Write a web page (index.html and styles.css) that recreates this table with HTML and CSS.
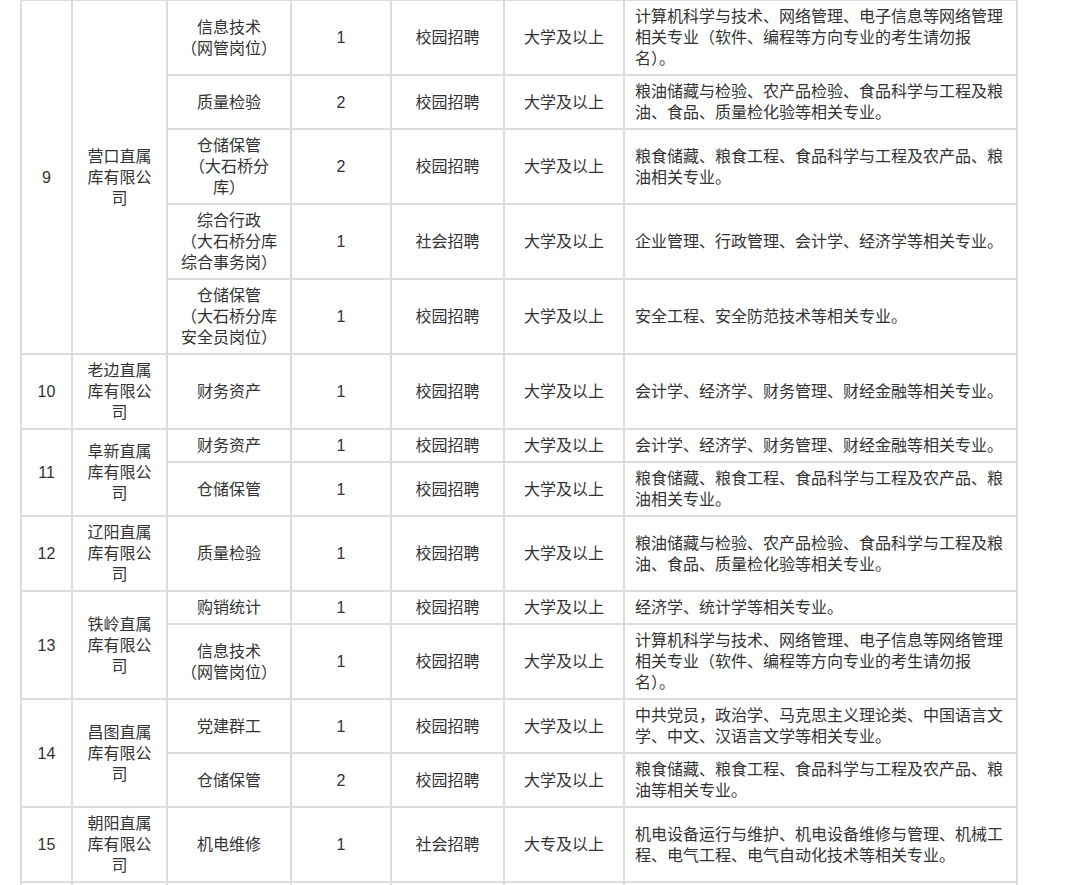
FILE: index.html
```html
<!DOCTYPE html>
<html lang="zh-CN">
<head>
<meta charset="utf-8">
<title>招聘岗位表</title>
<link rel="stylesheet" href="styles.css">
</head>
<body>
<div class="wrap">
<table class="jobs">
<colgroup>
<col class="c-no"><col class="c-co"><col class="c-pos"><col class="c-num"><col class="c-way"><col class="c-edu"><col class="c-major">
</colgroup>
<tbody>
<tr class="first">
<td rowspan="5">9</td><td rowspan="5">营口直属库有限公司</td>
<td>信息技术<br>（网管岗位）</td><td>1</td><td>校园招聘</td><td>大学及以上</td>
<td class="major">计算机科学与技术、网络管理、电子信息等网络管理相关专业（软件、编程等方向专业的考生请勿报名）。</td>
</tr>
<tr>
<td>质量检验</td><td>2</td><td>校园招聘</td><td>大学及以上</td>
<td class="major">粮油储藏与检验、农产品检验、食品科学与工程及粮油、食品、质量检化验等相关专业。</td>
</tr>
<tr>
<td>仓储保管<br>（大石桥分库）</td><td>2</td><td>校园招聘</td><td>大学及以上</td>
<td class="major">粮食储藏、粮食工程、食品科学与工程及农产品、粮油相关专业。</td>
</tr>
<tr>
<td>综合行政<br>（大石桥分库综合事务岗）</td><td>1</td><td>社会招聘</td><td>大学及以上</td>
<td class="major">企业管理、行政管理、会计学、经济学等相关专业。</td>
</tr>
<tr>
<td>仓储保管<br>（大石桥分库安全员岗位）</td><td>1</td><td>校园招聘</td><td>大学及以上</td>
<td class="major">安全工程、安全防范技术等相关专业。</td>
</tr>
<tr>
<td>10</td><td>老边直属库有限公司</td>
<td>财务资产</td><td>1</td><td>校园招聘</td><td>大学及以上</td>
<td class="major">会计学、经济学、财务管理、财经金融等相关专业。</td>
</tr>
<tr>
<td rowspan="2">11</td><td rowspan="2">阜新直属库有限公司</td>
<td>财务资产</td><td>1</td><td>校园招聘</td><td>大学及以上</td>
<td class="major">会计学、经济学、财务管理、财经金融等相关专业。</td>
</tr>
<tr>
<td>仓储保管</td><td>1</td><td>校园招聘</td><td>大学及以上</td>
<td class="major">粮食储藏、粮食工程、食品科学与工程及农产品、粮油相关专业。</td>
</tr>
<tr>
<td>12</td><td>辽阳直属库有限公司</td>
<td>质量检验</td><td>1</td><td>校园招聘</td><td>大学及以上</td>
<td class="major">粮油储藏与检验、农产品检验、食品科学与工程及粮油、食品、质量检化验等相关专业。</td>
</tr>
<tr>
<td rowspan="2">13</td><td rowspan="2">铁岭直属库有限公司</td>
<td>购销统计</td><td>1</td><td>校园招聘</td><td>大学及以上</td>
<td class="major">经济学、统计学等相关专业。</td>
</tr>
<tr>
<td>信息技术<br>（网管岗位）</td><td>1</td><td>校园招聘</td><td>大学及以上</td>
<td class="major">计算机科学与技术、网络管理、电子信息等网络管理相关专业（软件、编程等方向专业的考生请勿报名）。</td>
</tr>
<tr>
<td rowspan="2">14</td><td rowspan="2">昌图直属库有限公司</td>
<td>党建群工</td><td>1</td><td>校园招聘</td><td>大学及以上</td>
<td class="major">中共党员，政治学、马克思主义理论类、中国语言文学、中文、汉语言文学等相关专业。</td>
</tr>
<tr>
<td>仓储保管</td><td>2</td><td>校园招聘</td><td>大学及以上</td>
<td class="major">粮食储藏、粮食工程、食品科学与工程及农产品、粮油等相关专业。</td>
</tr>
<tr>
<td>15</td><td>朝阳直属库有限公司</td>
<td>机电维修</td><td>1</td><td>社会招聘</td><td>大专及以上</td>
<td class="major">机电设备运行与维护、机电设备维修与管理、机械工程、电气工程、电气自动化技术等相关专业。</td>
</tr>
<tr class="next">
<td></td><td></td><td></td><td></td><td></td><td></td><td></td>
</tr>
</tbody>
</table>
</div>
</body>
</html>
```
FILE: styles.css
```css
html, body {
  margin: 0;
  padding: 0;
  background: #fff;
}
.wrap {
  padding: 0 0 0 20px;
}
.jobs {
  border-collapse: collapse;
  table-layout: fixed;
  width: 998px;
  font-family: "Liberation Sans", "Noto Sans CJK SC", sans-serif;
  font-size: 16px;
  line-height: 21px;
  color: #333;
}
.c-no { width: 51px; }
.c-co { width: 95px; }
.c-pos { width: 124px; }
.c-num { width: 100px; }
.c-way { width: 113px; }
.c-edu { width: 120px; }
.c-major { width: 393px; }
.jobs td {
  border: 2px solid #dcdcdc;
  padding: 5px 10px;
  text-align: center;
  vertical-align: middle;
}
.jobs tr.first td {
  border-top-width: 1px;
}
.jobs td.major {
  text-align: left;
}
.jobs tr.next td {
  height: 30px;
}
```
